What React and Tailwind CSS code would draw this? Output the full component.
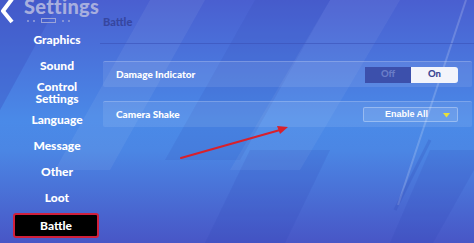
import React from "react";

const menu = [
  { label: "Graphics", h: "h-[26px]" },
  { label: "Sound", h: "h-[26px]" },
  { label: "Control\nSettings", h: "h-[28px]" },
  { label: "Language", h: "h-[26px]" },
  { label: "Message", h: "h-[26px]" },
  { label: "Other", h: "h-[26px]" },
  { label: "Loot", h: "h-[26px]" },
];

const Backdrop = () => (
  <svg className="absolute inset-0" width="474" height="243" viewBox="0 0 474 243">
    <defs>
      <linearGradient id="bg" x1="0" y1="0" x2="0" y2="1">
        <stop offset="0" stopColor="#4a5fd0" />
        <stop offset="0.5" stopColor="#4a8ae8" />
        <stop offset="0.62" stopColor="#4b86e4" />
        <stop offset="1" stopColor="#4856c6" />
      </linearGradient>
    </defs>
    <rect width="474" height="243" fill="url(#bg)" />
    <polygon points="0,0 60,0 0,110" fill="#3a4fc0" opacity="0.35" />
    <polygon points="150,0 205,0 110,170 55,170" fill="#ffffff" opacity="0.06" />
    <polygon points="255,0 330,0 240,160 165,160" fill="#2a3fb0" opacity="0.12" />
    <polygon points="250,150 330,150 285,243 205,243" fill="#2a3fb0" opacity="0.14" />
    <polygon points="330,0 400,0 300,170 230,170" fill="#ffffff" opacity="0.05" />
    <polygon points="430,150 474,150 474,170 433,243 390,243" fill="#2a3fb0" opacity="0.14" />
    <line x1="466" y1="0" x2="398" y2="205" stroke="#ffffff" strokeOpacity="0.18" strokeWidth="2" />
    <line x1="430" y1="140" x2="395" y2="210" stroke="#2a3fb0" strokeOpacity="0.2" strokeWidth="3" />
  </svg>
);

export default function App() {
  return (
    <div className="relative w-[474px] h-[243px] overflow-hidden font-['Lato',sans-serif]">
      <Backdrop />
      <div className="relative flex h-full">
        <aside className="w-[100px] shrink-0 flex flex-col">
          <div className="relative h-[27px]">
            <svg className="absolute left-0 top-0" width="16" height="24" viewBox="0 0 16 24">
              <polyline points="12,-1 3,11 12,22" fill="none" stroke="#ffffff" strokeWidth="4" strokeLinejoin="round" />
            </svg>
            <div className="absolute left-[24px] -top-[4px] text-[20px] font-black text-[#a7aede] leading-none tracking-[0.3px]">
              Settings
            </div>
            <div className="absolute left-[27px] top-[18px] flex items-center gap-[4px]">
              <span className="w-[2px] h-[2px] rounded-full bg-[#9aa3d8]" />
              <span className="w-[2px] h-[2px] rounded-full bg-[#9aa3d8]" />
              <span className="w-[15px] h-[5px] border border-[#9aa3d8] mx-[2px]" />
              <span className="w-[2px] h-[2px] rounded-full bg-[#9aa3d8]" />
              <span className="w-[2px] h-[2px] rounded-full bg-[#9aa3d8]" />
            </div>
          </div>
          {menu.map((m) => (
            <div
              key={m.label}
              className={`${m.h} flex items-center justify-center text-center whitespace-pre-line text-white font-black text-[12px] leading-[12px] pl-[14px]`}
            >
              {m.label}
            </div>
          ))}
          <div className="mt-[2px] ml-[13px] w-[86px] h-[25px] rounded-[3px] border-2 border-[#d0203c] bg-black flex items-center justify-center text-white font-black text-[12px]">
            Battle
          </div>
        </aside>
        <main className="flex-1 flex flex-col">
          <div className="h-[44px] flex items-center pl-[3px] pt-[2px] border-b border-[#3a52b8]/60 text-[11px] font-black text-[#3646a0]">
            Battle
          </div>
          <div className="mt-[17px] ml-[3px] mr-[2px] h-[26px] flex items-center justify-between pl-[13px] pr-[14px] bg-white/[0.09] border-t border-white/20 rounded-[2px]">
            <span className="text-white font-black text-[10px]">Damage Indicator</span>
            <div className="flex h-[16px] text-[9.5px] font-black">
              <div className="w-[46px] bg-[#3c50ac] flex items-center justify-center text-[#6a7dc8]">Off</div>
              <div className="w-[47px] bg-[#f3f4fb] rounded-r-[3px] flex items-center justify-center text-[#3b4794]">On</div>
            </div>
          </div>
          <div className="mt-[14px] ml-[3px] mr-[2px] h-[26px] flex items-center justify-between pl-[13px] pr-[14px] bg-white/[0.09] border-t border-white/20 rounded-[2px]">
            <span className="text-white font-black text-[10px]">Camera Shake</span>
            <div className="relative w-[95px] h-[15px] border border-white/30 bg-white/10 rounded-[2px] flex items-center justify-center text-white font-bold text-[9px] font-['Liberation_Sans',sans-serif]">
              <span className="-ml-[8px]">Enable All</span>
              <svg className="absolute right-[7px] top-[5px]" width="7" height="5" viewBox="0 0 7 5">
                <polygon points="0,0 7,0 3.5,4.5" fill="#e8e03a" />
              </svg>
            </div>
          </div>
        </main>
      </div>
      <svg className="absolute left-0 top-0 pointer-events-none" width="474" height="243" viewBox="0 0 474 243">
        <line x1="181" y1="158" x2="280" y2="130" stroke="#d8202c" strokeWidth="2.2" strokeLinecap="round" />
        <polygon points="288,127 277,126 280,134" fill="#d8202c" />
      </svg>
    </div>
  );
}
